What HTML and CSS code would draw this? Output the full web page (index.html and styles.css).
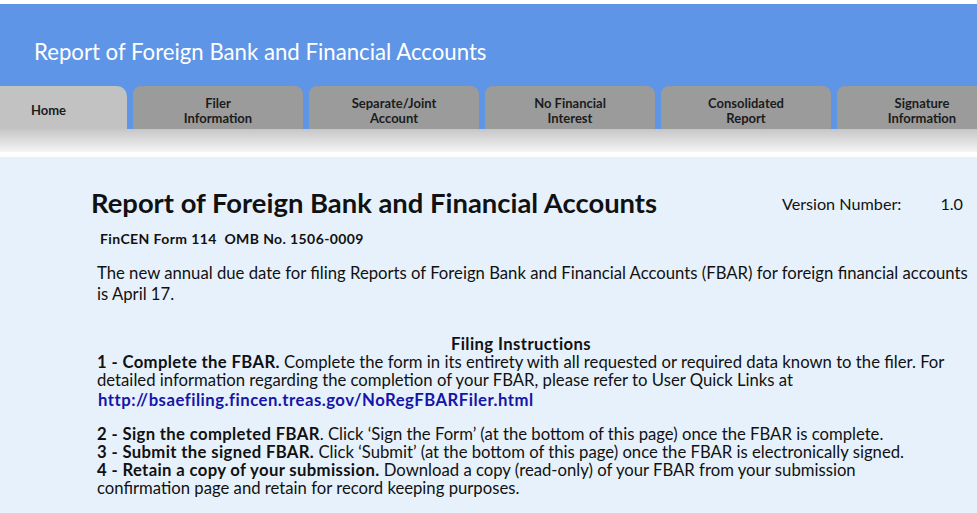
FILE: index.html
```html
<!DOCTYPE html>
<html lang="en">
<head>
    <meta charset="UTF-8">
    <title>Report of Foreign Bank and Financial Accounts</title>
    <link rel="stylesheet" href="styles.css">
</head>
<body>
    <div class="banner">
        <div class="site-title">Report of Foreign Bank and Financial Accounts</div>
        <ul class="tabs">
            <li class="tab active">Home</li>
            <li class="tab">Filer<br>Information</li>
            <li class="tab">Separate/Joint<br>Account</li>
            <li class="tab">No Financial<br>Interest</li>
            <li class="tab">Consolidated<br>Report</li>
            <li class="tab">Signature<br>Information</li>
        </ul>
    </div>
    <div class="shade"></div>

    <div class="content">
        <div class="form-head">
            <h1>Report of Foreign Bank and Financial Accounts</h1>
            <div class="version">
                <span>Version Number:</span>
                <span>1.0</span>
            </div>
        </div>
        <div class="form-id">FinCEN Form 114&nbsp; OMB No. 1506-0009</div>

        <p class="notice">The new annual due date for filing Reports of Foreign Bank and Financial Accounts (FBAR) for foreign financial accounts is April 17.</p>

        <div class="instructions">
            <h2>Filing Instructions</h2>
            <p><b>1 - Complete the FBAR.</b> Complete the form in its entirety with all requested or required data known to the filer. For detailed information regarding the completion of your FBAR, please refer to User Quick Links at</p>
            <a class="link" href="#">http://bsaefiling.fincen.treas.gov/NoRegFBARFiler.html</a>

            <p class="steps"><b>2 - Sign the completed FBAR</b>. Click ‘Sign the Form’ (at the bottom of this page) once the FBAR is complete.<br>
            <b>3 - Submit the signed FBAR.</b> Click ‘Submit’ (at the bottom of this page) once the FBAR is electronically signed.<br>
            <b>4 - Retain a copy of your submission.</b> Download a copy (read-only) of your FBAR from your submission confirmation page and retain for record keeping purposes.</p>
        </div>
    </div>
</body>
</html>
```

FILE: styles.css
```css
body {
    margin: 0;
    padding-top: 4px;
    background: white;
    font-family: 'Lato', 'Liberation Sans', sans-serif;
    color: #111;
}

.banner {
    background: #5e95e6;
}

.site-title {
    color: white;
    font-size: 22.2px;
    padding: 35px 0 0 34px;
    height: 47px;
    line-height: 26px;
}

.tabs {
    list-style: none;
    margin: 0;
    padding: 0;
    display: flex;
    gap: 6px;
    height: 43px;
}

.tab {
    width: 170px;
    flex-shrink: 0;
    background: #9b9b9b;
    border-radius: 8px 8px 0 0;
    font-size: 13px;
    font-weight: bold;
    color: #1c1c1c;
    text-align: center;
    line-height: 15px;
    padding-top: 10px;
    box-sizing: border-box;
}

.tab.active {
    width: 127px;
    background: #c2c2c2;
    border-radius: 0 10px 0 0;
    padding: 17px 30px 0 0;
}

.shade {
    height: 23px;
    background: linear-gradient(#c6c6c6, #f5f5f5);
    border-bottom: 5px solid white;
}

.content {
    background: #e7f1fc;
    padding: 29px 4px 26px 91px;
}

.form-head {
    display: flex;
    justify-content: space-between;
    align-items: center;
}

h1 {
    margin: 0;
    font-size: 27.4px;
    line-height: 34px;
}

.version {
    display: flex;
    gap: 39px;
    font-size: 16.2px;
    padding-right: 10px;
}

.form-id {
    font-size: 14px;
    font-weight: bold;
    letter-spacing: 0.4px;
    margin: 10px 0 0 9px;
}

.notice {
    margin: 16px 0 0 6px;
    font-size: 16.7px;
    line-height: 21px;
}

.instructions {
    width: 848px;
    margin: 30px 0 0 6px;
    font-size: 16.7px;
    line-height: 18px;
}

.instructions h2 {
    margin: 0;
    font-size: 16.7px;
    letter-spacing: 0.4px;
    text-align: center;
}

.instructions p {
    margin: 0;
}

.instructions b {
    letter-spacing: 0.35px;
}

.link {
    display: block;
    color: #1515a8;
    font-weight: bold;
    letter-spacing: 0.5px;
    text-decoration: none;
    margin: 2px 0 0 1px;
}

.instructions .steps {
    margin-top: 16px;
}
```
